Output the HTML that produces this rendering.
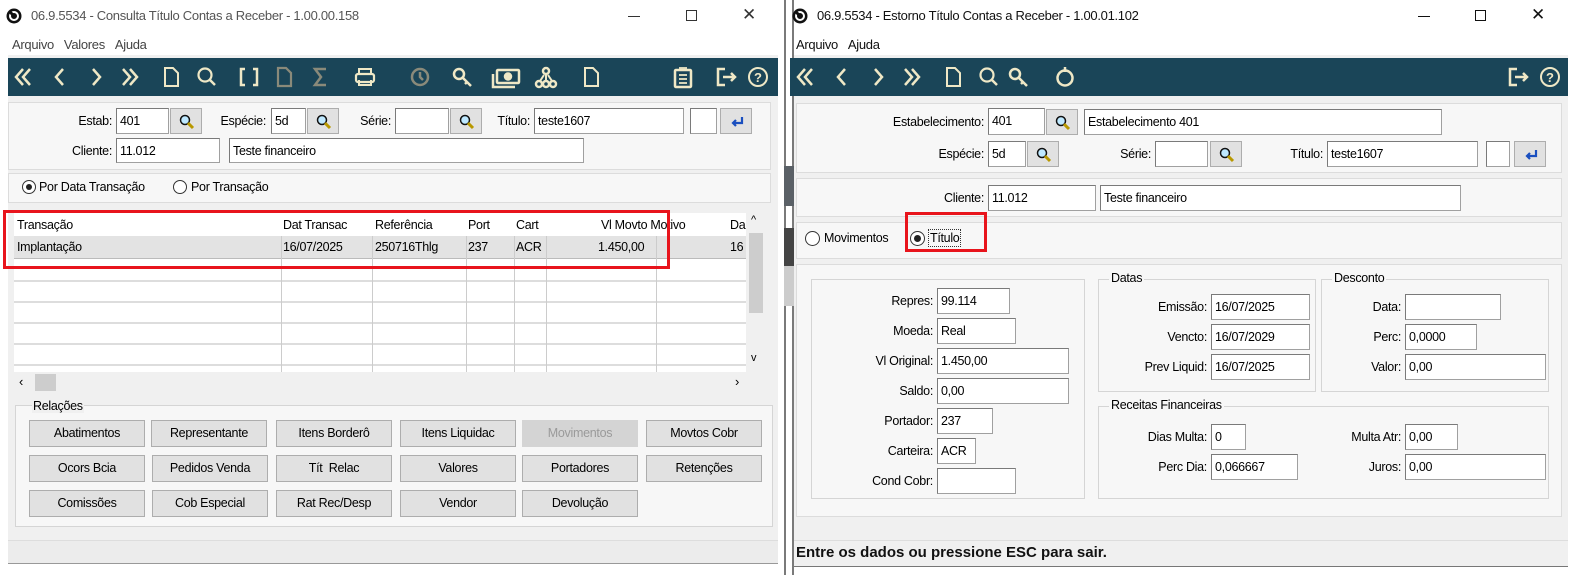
<!DOCTYPE html>
<html><head><meta charset="utf-8"><style>
*{margin:0;padding:0;box-sizing:border-box}
body{width:1579px;height:575px;position:relative;background:#fff;font-family:"Liberation Sans",sans-serif;font-size:12px;color:#000;overflow:hidden}
.a{position:absolute}
.t{position:absolute;white-space:nowrap;font-size:12.5px;letter-spacing:-0.3px}
.in{position:absolute;background:#fff;border:1px solid #a0a0a0;border-top-color:#7a7a7a;border-left-color:#7a7a7a;padding:5px 0 0 3px;font-size:12.5px;white-space:nowrap;letter-spacing:-0.3px}
.lb{position:absolute;text-align:right;white-space:nowrap;font-size:12.5px;letter-spacing:-0.3px}
.lp{position:absolute;background:#e1e1e1;border:1px solid #adadad;width:32px;height:26px}
.lp svg{position:absolute;left:8px;top:5px}
.box{position:absolute;border:1px solid #dcdcdc;background:#f7f7f7}
.grp{position:absolute;border:1px solid #d5d5d5}
.gt{position:absolute;background:#f7f7f7;padding:0 2px;font-size:12.5px;top:-9px;left:10px;letter-spacing:-0.3px}
.btn{position:absolute;width:116px;height:27px;background:#e1e1e1;border:1px solid #adadad;text-align:center;line-height:25px;font-size:12.5px;letter-spacing:-0.3px}
.tb{position:absolute;background:#1a4558;height:38px;top:58px}
.tb svg{position:absolute;top:7px}
.red{position:absolute;border:3px solid #e8141c}
</style></head><body>
<!-- LEFT WINDOW -->
<div class="a" style="left:0;top:0;width:784px;height:575px;background:#fff"></div>
<svg class="a" style="left:6px;top:8px" width="16" height="16"><circle cx="8" cy="8" r="7.5" fill="#111"/><circle cx="8" cy="8" r="4" fill="none" stroke="#fff" stroke-width="2"/><path d="M4 4 L8 8" stroke="#111" stroke-width="3"/></svg>
<div class="t" style="left:31px;top:8px;font-size:13px;color:#555">06.9.5534 - Consulta Título Contas a Receber - 1.00.00.158</div>
<div class="a" style="left:628px;top:16px;width:12px;height:1px;background:#333"></div>
<div class="a" style="left:686px;top:10px;width:11px;height:11px;border:1px solid #333"></div>
<div class="t" style="left:742px;top:5px;font-size:17px;color:#333">✕</div>
<div class="t" style="left:12px;top:37px;font-size:13px;color:#444">Arquivo&nbsp;&nbsp;&nbsp;Valores&nbsp;&nbsp;&nbsp;Ajuda</div>
<div class="a" style="left:8px;top:55px;width:770px;height:485px;background:#f0f0f0"></div>
<div class="tb" style="left:8px;width:770px">
<svg style="left:5px" width="760" height="24" fill="none" stroke="#efe8c6" stroke-width="2.5">
<path d="M10 4l-7 8 7 8M17 4l-7 8 7 8"/>
<path d="M50 4l-7 8 7 8"/>
<path d="M80 4l7 8-7 8"/>
<path d="M110 4l7 8-7 8M117 4l7 8-7 8"/>
<path d="M152 3h8l5 5v13h-13z" stroke-width="2"/>
<circle cx="192" cy="10" r="6.5" stroke-width="2.2"/><path d="M197 15l5 5"/>
<path d="M232 4h-4v16h4M240 4h4v16h-4"/>
<path d="M265 3h8l5 5v13h-13z" stroke="#8a8a7a" stroke-width="2.2"/>
<path d="M313 4h-11l6 8-6 8h11" stroke="#8a8a7a"/>
<rect x="343" y="9" width="18" height="8" rx="2" stroke-width="2.2"/><path d="M346 9V4h12v5M346 15v5h12v-5" stroke-width="2"/>
<circle cx="407" cy="12" r="8" stroke="#8a8a7a"/><path d="M407 7v5l3 3" stroke="#8a8a7a"/>
<circle cx="446" cy="9" r="5"/><path d="M450 13l8 8M454 17l-2 2"/>
<rect x="484" y="5" width="22" height="13" rx="1"/><circle cx="495" cy="11.5" r="3" fill="#efe8c6"/><path d="M480 9v13h22"/>
<circle cx="533" cy="6" r="3"/><circle cx="526" cy="19" r="3"/><circle cx="533" cy="19" r="3"/><circle cx="540" cy="19" r="3"/><path d="M533 9v7M531 10l-4 6M535 10l4 6" stroke-width="2"/>
<path d="M572 3h8l5 5v13h-13z" stroke-width="2"/>
<rect x="662" y="5" width="16" height="17" rx="1"/><path d="M666 3h8M666 10h8M666 14h8M666 18h8" stroke-width="1.8"/>
<path d="M712 4h-7v16h7M710 12h12M718 8l4 4-4 4"/>
<circle cx="745" cy="12" r="9" stroke-width="2"/><text x="741" y="17" fill="#efe8c6" stroke="none" font-size="13" font-weight="bold" font-family="Liberation Sans">?</text>
</svg></div>
<div class="box" style="left:8px;top:102px;width:763px;height:68px"></div>
<div class="lb" style="left:60px;top:114px;width:52px">Estab:</div>
<div class="in" style="left:116px;top:108px;width:53px;height:26px">401</div>
<div class="lp" style="left:170px;top:108px"><svg width="16" height="16"><circle cx="6" cy="6" r="4.5" fill="#bfe9ff" stroke="#111" stroke-width="1.5"/><path d="M9 9l5 5" stroke="#b89800" stroke-width="3"/></svg></div>
<div class="lb" style="left:200px;top:114px;width:66px">Espécie:</div>
<div class="in" style="left:271px;top:108px;width:35px;height:26px">5d</div>
<div class="lp" style="left:307px;top:108px"><svg width="16" height="16"><circle cx="6" cy="6" r="4.5" fill="#bfe9ff" stroke="#111" stroke-width="1.5"/><path d="M9 9l5 5" stroke="#b89800" stroke-width="3"/></svg></div>
<div class="lb" style="left:340px;top:114px;width:51px">Série:</div>
<div class="in" style="left:395px;top:108px;width:54px;height:26px"></div>
<div class="lp" style="left:450px;top:108px"><svg width="16" height="16"><circle cx="6" cy="6" r="4.5" fill="#bfe9ff" stroke="#111" stroke-width="1.5"/><path d="M9 9l5 5" stroke="#b89800" stroke-width="3"/></svg></div>
<div class="lb" style="left:480px;top:114px;width:50px">Título:</div>
<div class="in" style="left:534px;top:108px;width:150px;height:26px">teste1607</div>
<div class="in" style="left:690px;top:108px;width:27px;height:26px"></div>
<div class="lp" style="left:720px;top:108px"><svg width="16" height="16"><path d="M13 3v6H4M7 6l-3 3 3 3" fill="none" stroke="#1a4fbf" stroke-width="2.2"/></svg></div>
<div class="lb" style="left:50px;top:144px;width:62px">Cliente:</div>
<div class="in" style="left:116px;top:138px;width:104px;height:25px">11.012</div>
<div class="in" style="left:229px;top:138px;width:355px;height:25px">Teste financeiro</div>
<div class="box" style="left:8px;top:173px;width:763px;height:30px"></div>
<div class="a" style="left:22px;top:180px;width:14px;height:14px;border:1px solid #333;border-radius:50%;background:#fff"><div class="a" style="left:3px;top:3px;width:6px;height:6px;border-radius:50%;background:#222"></div></div>
<div class="t" style="left:39px;top:180px">Por Data Transação</div>
<div class="a" style="left:173px;top:180px;width:14px;height:14px;border:1px solid #333;border-radius:50%;background:#fff"></div>
<div class="t" style="left:191px;top:180px">Por Transação</div>
<!-- grid -->
<div class="a" style="left:14px;top:213px;width:752px;height:180px;background:#fff"></div>
<div class="a" style="left:14px;top:236px;width:732px;height:22px;background:#e3e3e3"></div>
<div class="a" style="left:14px;top:258px;width:732px;height:1px;background:#bbb"></div>
<div class="a" style="left:14px;top:280px;width:732px;height:2px;background:#ddd"></div>
<div class="a" style="left:14px;top:301px;width:732px;height:2px;background:#ddd"></div>
<div class="a" style="left:14px;top:322px;width:732px;height:2px;background:#ddd"></div>
<div class="a" style="left:14px;top:343px;width:732px;height:2px;background:#ddd"></div>
<div class="a" style="left:14px;top:364px;width:732px;height:2px;background:#ddd"></div>
<div class="a" style="left:281px;top:236px;width:1px;height:136px;background:#ccc"></div>
<div class="a" style="left:372px;top:236px;width:1px;height:136px;background:#ccc"></div>
<div class="a" style="left:466px;top:236px;width:1px;height:136px;background:#ccc"></div>
<div class="a" style="left:514px;top:236px;width:1px;height:136px;background:#ccc"></div>
<div class="a" style="left:546px;top:236px;width:1px;height:136px;background:#ccc"></div>
<div class="a" style="left:656px;top:236px;width:1px;height:136px;background:#ccc"></div>
<div class="t" style="left:17px;top:218px">Transação</div>
<div class="t" style="left:283px;top:218px">Dat Transac</div>
<div class="t" style="left:375px;top:218px">Referência</div>
<div class="t" style="left:468px;top:218px">Port</div>
<div class="t" style="left:516px;top:218px">Cart</div>
<div class="t" style="left:601px;top:218px">Vl Movto Motivo</div>
<div class="t" style="left:730px;top:218px">Da</div>
<div class="t" style="left:17px;top:240px">Implantação</div>
<div class="t" style="left:283px;top:240px">16/07/2025</div>
<div class="t" style="left:375px;top:240px">250716Thlg</div>
<div class="t" style="left:468px;top:240px">237</div>
<div class="t" style="left:516px;top:240px">ACR</div>
<div class="t" style="left:598px;top:240px">1.450,00</div>
<div class="t" style="left:730px;top:240px">16</div>
<div class="a" style="left:746px;top:213px;width:20px;height:159px;background:#f0f0f0"></div>
<div class="a" style="left:749px;top:233px;width:14px;height:80px;background:#cdcdcd"></div>
<div class="t" style="left:751px;top:214px;font-size:11px">^</div>
<div class="t" style="left:751px;top:352px;font-size:11px">v</div>
<div class="a" style="left:14px;top:372px;width:752px;height:21px;background:#f0f0f0"></div>
<div class="a" style="left:35px;top:374px;width:21px;height:17px;background:#cdcdcd"></div>
<div class="t" style="left:19px;top:374px;font-size:13px">‹</div>
<div class="t" style="left:735px;top:374px;font-size:13px">›</div>
<div class="red" style="left:3px;top:210px;width:667px;height:59px"></div>
<!-- relations -->
<div class="grp" style="left:15px;top:405px;width:758px;height:122px;background:#f7f7f7"></div>
<div class="t" style="left:32px;top:399px;background:#f0f0f0;padding:0 1px">Relações</div>
<div class="btn" style="left:29px;top:420px">Abatimentos</div>
<div class="btn" style="left:151px;top:420px">Representante</div>
<div class="btn" style="left:276px;top:420px">Itens Borderô</div>
<div class="btn" style="left:400px;top:420px">Itens Liquidac</div>
<div class="btn" style="left:522px;top:420px;background:#d4d4d4;border-color:#d4d4d4;color:#9a9a9a">Movimentos</div>
<div class="btn" style="left:646px;top:420px">Movtos Cobr</div>
<div class="btn" style="left:29px;top:455px">Ocors Bcia</div>
<div class="btn" style="left:152px;top:455px">Pedidos Venda</div>
<div class="btn" style="left:276px;top:455px">Tít&nbsp; Relac</div>
<div class="btn" style="left:400px;top:455px">Valores</div>
<div class="btn" style="left:522px;top:455px">Portadores</div>
<div class="btn" style="left:646px;top:455px">Retenções</div>
<div class="btn" style="left:29px;top:490px">Comissões</div>
<div class="btn" style="left:152px;top:490px">Cob Especial</div>
<div class="btn" style="left:276px;top:490px">Rat Rec/Desp</div>
<div class="btn" style="left:400px;top:490px">Vendor</div>
<div class="btn" style="left:522px;top:490px">Devolução</div>
<div class="a" style="left:8px;top:540px;width:770px;height:24px;background:#ececec;border-top:1px solid #ddd;border-bottom:1px solid #999"></div>
<!-- divider -->
<div class="a" style="left:778px;top:0;width:16px;height:575px;background:#fff"></div>
<div class="a" style="left:784px;top:0;width:2px;height:575px;background:#7a7a7a"></div>
<div class="a" style="left:792px;top:0;width:2px;height:575px;background:#7a7a7a"></div>
<div class="a" style="left:784px;top:166px;width:10px;height:40px;background:#5a6066"></div>
<div class="a" style="left:784px;top:228px;width:10px;height:38px;background:#444"></div>
<div class="a" style="left:784px;top:266px;width:10px;height:40px;background:#ccc"></div>
<!-- RIGHT WINDOW -->
<svg class="a" style="left:792px;top:8px" width="16" height="16"><circle cx="8" cy="8" r="7.5" fill="#111"/><circle cx="8" cy="8" r="4" fill="none" stroke="#fff" stroke-width="2"/><path d="M4 4 L8 8" stroke="#111" stroke-width="3"/></svg>
<div class="t" style="left:817px;top:8px;font-size:13px;color:#111">06.9.5534 - Estorno Título Contas a Receber - 1.00.01.102</div>
<div class="a" style="left:1418px;top:16px;width:12px;height:1px;background:#111"></div>
<div class="a" style="left:1475px;top:10px;width:11px;height:11px;border:1px solid #111"></div>
<div class="t" style="left:1531px;top:5px;font-size:17px;color:#111">✕</div>
<div class="t" style="left:796px;top:37px;font-size:13px;color:#111">Arquivo&nbsp;&nbsp;&nbsp;Ajuda</div>
<div class="a" style="left:794px;top:55px;width:774px;height:485px;background:#f0f0f0"></div>
<div class="tb" style="left:790px;width:778px">
<svg style="left:5px" width="770" height="24" fill="none" stroke="#efe8c6" stroke-width="2.5">
<path d="M10 4l-7 8 7 8M17 4l-7 8 7 8"/>
<path d="M50 4l-7 8 7 8"/>
<path d="M80 4l7 8-7 8"/>
<path d="M110 4l7 8-7 8M117 4l7 8-7 8"/>
<path d="M152 3h8l5 5v13h-13z" stroke-width="2"/>
<circle cx="192" cy="10" r="6.5" stroke-width="2.2"/><path d="M197 15l5 5"/>
<circle cx="220" cy="9" r="5"/><path d="M224 13l8 8M228 17l-2 2"/>
<circle cx="270" cy="13" r="7.5"/><path d="M270 2v5"/>
<path d="M722 4h-7v16h7M720 12h12M728 8l4 4-4 4"/>
<circle cx="755" cy="12" r="9" stroke-width="2"/><text x="751" y="17" fill="#efe8c6" stroke="none" font-size="13" font-weight="bold" font-family="Liberation Sans">?</text>
</svg></div>
<div class="box" style="left:796px;top:103px;width:766px;height:70px"></div>
<div class="lb" style="left:860px;top:115px;width:124px">Estabelecimento:</div>
<div class="in" style="left:988px;top:108px;width:57px;height:27px">401</div>
<div class="lp" style="left:1046px;top:109px"><svg width="16" height="16"><circle cx="6" cy="6" r="4.5" fill="#bfe9ff" stroke="#111" stroke-width="1.5"/><path d="M9 9l5 5" stroke="#b89800" stroke-width="3"/></svg></div>
<div class="in" style="left:1084px;top:109px;width:358px;height:26px">Estabelecimento 401</div>
<div class="lb" style="left:900px;top:147px;width:84px">Espécie:</div>
<div class="in" style="left:988px;top:141px;width:38px;height:26px">5d</div>
<div class="lp" style="left:1027px;top:141px"><svg width="16" height="16"><circle cx="6" cy="6" r="4.5" fill="#bfe9ff" stroke="#111" stroke-width="1.5"/><path d="M9 9l5 5" stroke="#b89800" stroke-width="3"/></svg></div>
<div class="lb" style="left:1100px;top:147px;width:51px">Série:</div>
<div class="in" style="left:1155px;top:141px;width:53px;height:26px"></div>
<div class="lp" style="left:1210px;top:141px"><svg width="16" height="16"><circle cx="6" cy="6" r="4.5" fill="#bfe9ff" stroke="#111" stroke-width="1.5"/><path d="M9 9l5 5" stroke="#b89800" stroke-width="3"/></svg></div>
<div class="lb" style="left:1270px;top:147px;width:53px">Título:</div>
<div class="in" style="left:1327px;top:141px;width:151px;height:26px">teste1607</div>
<div class="in" style="left:1486px;top:141px;width:24px;height:26px"></div>
<div class="lp" style="left:1514px;top:141px"><svg width="16" height="16"><path d="M13 3v6H4M7 6l-3 3 3 3" fill="none" stroke="#1a4fbf" stroke-width="2.2"/></svg></div>
<div class="box" style="left:796px;top:178px;width:766px;height:39px"></div>
<div class="lb" style="left:900px;top:191px;width:84px">Cliente:</div>
<div class="in" style="left:988px;top:185px;width:108px;height:26px">11.012</div>
<div class="in" style="left:1100px;top:185px;width:361px;height:26px">Teste financeiro</div>
<div class="box" style="left:796px;top:222px;width:766px;height:37px"></div>
<div class="a" style="left:805px;top:231px;width:15px;height:15px;border:1px solid #333;border-radius:50%;background:#fff"></div>
<div class="t" style="left:824px;top:231px">Movimentos</div>
<div class="a" style="left:910px;top:231px;width:15px;height:15px;border:1px solid #333;border-radius:50%;background:#fff"><div class="a" style="left:3px;top:3px;width:7px;height:7px;border-radius:50%;background:#222"></div></div>
<div class="t" style="left:928px;top:229px;border:1px dotted #333;padding:1px 1px">Título</div>
<div class="red" style="left:905px;top:212px;width:82px;height:40px"></div>
<div class="box" style="left:796px;top:264px;width:766px;height:253px"></div>
<div class="grp" style="left:811px;top:279px;width:274px;height:220px"></div>
<div class="grp" style="left:1098px;top:279px;width:218px;height:113px"><span class="gt">Datas</span></div>
<div class="grp" style="left:1321px;top:279px;width:228px;height:113px"><span class="gt">Desconto</span></div>
<div class="grp" style="left:1098px;top:406px;width:451px;height:93px"><span class="gt">Receitas Financeiras</span></div>
<div class="lb" style="left:840px;top:294px;width:93px">Repres:</div><div class="in" style="left:937px;top:288px;width:73px;height:26px">99.114</div>
<div class="lb" style="left:840px;top:324px;width:93px">Moeda:</div><div class="in" style="left:937px;top:318px;width:79px;height:26px">Real</div>
<div class="lb" style="left:840px;top:354px;width:93px">Vl Original:</div><div class="in" style="left:937px;top:348px;width:132px;height:26px">1.450,00</div>
<div class="lb" style="left:840px;top:384px;width:93px">Saldo:</div><div class="in" style="left:937px;top:378px;width:132px;height:26px">0,00</div>
<div class="lb" style="left:840px;top:414px;width:93px">Portador:</div><div class="in" style="left:937px;top:408px;width:56px;height:26px">237</div>
<div class="lb" style="left:840px;top:444px;width:93px">Carteira:</div><div class="in" style="left:937px;top:438px;width:39px;height:26px">ACR</div>
<div class="lb" style="left:840px;top:474px;width:93px">Cond Cobr:</div><div class="in" style="left:937px;top:468px;width:79px;height:26px"></div>
<div class="lb" style="left:1110px;top:300px;width:97px">Emissão:</div><div class="in" style="left:1211px;top:294px;width:99px;height:26px">16/07/2025</div>
<div class="lb" style="left:1110px;top:330px;width:97px">Vencto:</div><div class="in" style="left:1211px;top:324px;width:99px;height:26px">16/07/2029</div>
<div class="lb" style="left:1110px;top:360px;width:97px">Prev Liquid:</div><div class="in" style="left:1211px;top:354px;width:99px;height:26px">16/07/2025</div>
<div class="lb" style="left:1330px;top:300px;width:71px">Data:</div><div class="in" style="left:1405px;top:294px;width:96px;height:26px"></div>
<div class="lb" style="left:1330px;top:330px;width:71px">Perc:</div><div class="in" style="left:1405px;top:324px;width:72px;height:26px">0,0000</div>
<div class="lb" style="left:1330px;top:360px;width:71px">Valor:</div><div class="in" style="left:1405px;top:354px;width:141px;height:26px">0,00</div>
<div class="lb" style="left:1110px;top:430px;width:97px">Dias Multa:</div><div class="in" style="left:1211px;top:424px;width:35px;height:26px">0</div>
<div class="lb" style="left:1110px;top:460px;width:97px">Perc Dia:</div><div class="in" style="left:1211px;top:454px;width:87px;height:26px">0,066667</div>
<div class="lb" style="left:1330px;top:430px;width:71px">Multa Atr:</div><div class="in" style="left:1405px;top:424px;width:53px;height:26px">0,00</div>
<div class="lb" style="left:1330px;top:460px;width:71px">Juros:</div><div class="in" style="left:1405px;top:454px;width:141px;height:26px">0,00</div>
<div class="a" style="left:794px;top:540px;width:774px;height:27px;background:#f0f0f0;border-top:1px solid #ddd;border-bottom:1px solid #777"></div>
<div class="t" style="left:796px;top:544px;font-size:15px;font-weight:bold;color:#111;letter-spacing:0">Entre os dados ou pressione ESC para sair.</div>
<div class="a" style="left:1568px;top:55px;width:11px;height:520px;background:#fff"></div>
</body></html>
